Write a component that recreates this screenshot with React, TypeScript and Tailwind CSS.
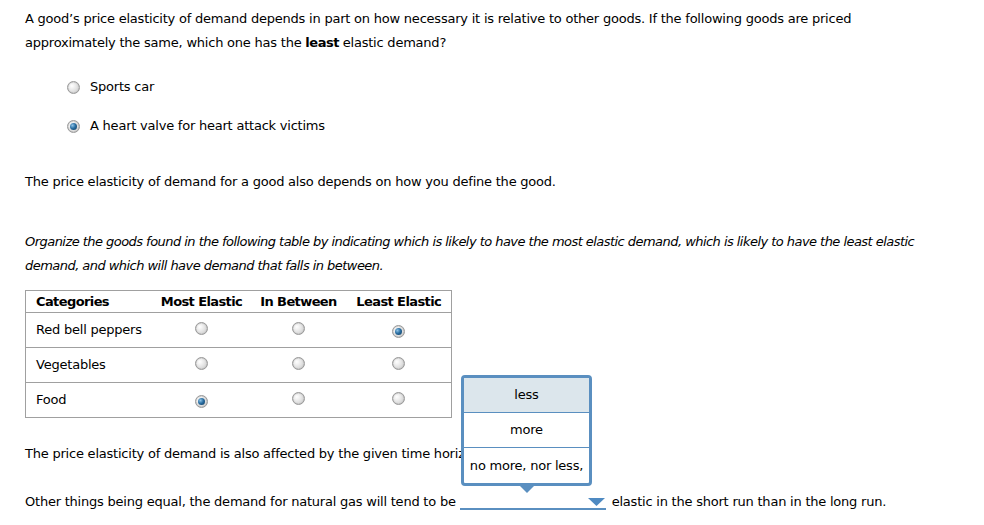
import React from "react";

function Radio({ checked = false }: { checked?: boolean }) {
  return (
    <span className="inline-flex items-center justify-center w-[13px] h-[13px] rounded-full border border-[#9a9a9a] bg-[radial-gradient(circle_at_35%_35%,#ffffff_0%,#e6e6e6_45%,#c4c4c4_100%)] shadow-[inset_0_0_1px_#888]">
      {checked && (
        <span className="block w-[7px] h-[7px] rounded-full bg-[radial-gradient(circle_at_35%_35%,#8fc3e6_0%,#2a6fa3_45%,#0d3556_100%)]" />
      )}
    </span>
  );
}

const rows: { name: string; sel: number }[] = [
  { name: "Red bell peppers", sel: 2 },
  { name: "Vegetables", sel: -1 },
  { name: "Food", sel: 0 },
];

export default function App() {
  return (
    <div className="relative w-[984px] h-[525px] bg-white text-black text-[13px] leading-[24px] tracking-[-0.22px] font-['Verdana','DejaVu_Sans',sans-serif] overflow-hidden">
      <div className="pl-[25px] pt-[7px]">
        <p className="whitespace-nowrap">
          A good’s price elasticity of demand depends in part on how necessary it is relative to other goods. If the following goods are priced
          <br />
          approximately the same, which one has the <b className="tracking-[-0.5px]">least</b> elastic demand?
        </p>

        <div className="mt-[20px] pl-[42px]">
          <div className="flex items-center h-[24px]">
            <Radio />
            <span className="ml-[10px]">Sports car</span>
          </div>
          <div className="flex items-center h-[24px] mt-[15px]">
            <Radio checked />
            <span className="ml-[10px]">A heart valve for heart attack victims</span>
          </div>
        </div>

        <p className="mt-[32px] whitespace-nowrap">The price elasticity of demand for a good also depends on how you define the good.</p>

        <p className="mt-[36px] italic whitespace-nowrap tracking-[-0.54px]">
          Organize the goods found in the following table by indicating which is likely to have the most elastic demand, which is likely to have the least elastic
          <br />
          demand, and which will have demand that falls in between.
        </p>

        <table className="mt-[12px] table-fixed border-collapse border border-[#a0a0a0] w-[426px]">
          <colgroup>
            <col className="w-[127px]" />
            <col className="w-[98px]" />
            <col className="w-[96px]" />
            <col className="w-[105px]" />
          </colgroup>
          <thead>
            <tr className="h-[22px] border-b border-[#a0a0a0]">
              <th className="text-left font-bold pl-[10px] leading-[20px] tracking-[-0.6px] whitespace-nowrap">Categories</th>
              <th className="font-bold leading-[20px] tracking-[-0.6px] whitespace-nowrap">Most Elastic</th>
              <th className="font-bold leading-[20px] tracking-[-0.6px] whitespace-nowrap">In Between</th>
              <th className="font-bold leading-[20px] tracking-[-0.6px] whitespace-nowrap">Least Elastic</th>
            </tr>
          </thead>
          <tbody>
            {rows.map((r, i) => (
              <tr key={r.name} className={"h-[35px] " + (i < rows.length - 1 ? "border-b border-[#a0a0a0]" : "")}>
                <td className="pl-[10px] whitespace-nowrap">{r.name}</td>
                {[0, 1, 2].map((c) => (
                  <td key={c} className="text-center align-middle">
                    <span className="inline-flex translate-y-[1px]">
                      <Radio checked={r.sel === c} />
                    </span>
                  </td>
                ))}
              </tr>
            ))}
          </tbody>
        </table>

        <p className="mt-[24px] whitespace-nowrap">The price elasticity of demand is also affected by the given time horizon.</p>

        <div className="mt-[24px] whitespace-nowrap flex items-start h-[24px]">
          <span>Other things being equal, the demand for natural gas will tend to be</span>
          <span className="relative inline-block ml-[4px] w-[146px] h-[20px] border-b-2 border-[#5a8fc0]">
            <svg className="absolute right-[1px] top-[8px]" width="17" height="8" viewBox="0 0 17 8">
              <polygon points="0,0 17,0 8.5,8" fill="#4f8ac2" />
            </svg>
          </span>
          <span className="ml-[6px]">elastic in the short run than in the long run.</span>
        </div>
      </div>

      <div className="absolute left-[461px] top-[375px] w-[131px]">
        <div className="border-[3px] border-[#5a8fc0] rounded-[4px] bg-white overflow-hidden text-center">
          <div className="h-[35px] flex items-center justify-center bg-[#dce6ec] border-b border-[#5a8fc0]">less</div>
          <div className="h-[35px] flex items-center justify-center border-b border-[#5a8fc0]">more</div>
          <div className="h-[35px] flex items-center justify-center whitespace-nowrap">no more, nor less,</div>
        </div>
        <svg className="absolute left-[58px] top-[110px]" width="16" height="8" viewBox="0 0 16 8">
          <polygon points="0,0 16,0 8,8" fill="#5a8fc0" />
        </svg>
      </div>
    </div>
  );
}
